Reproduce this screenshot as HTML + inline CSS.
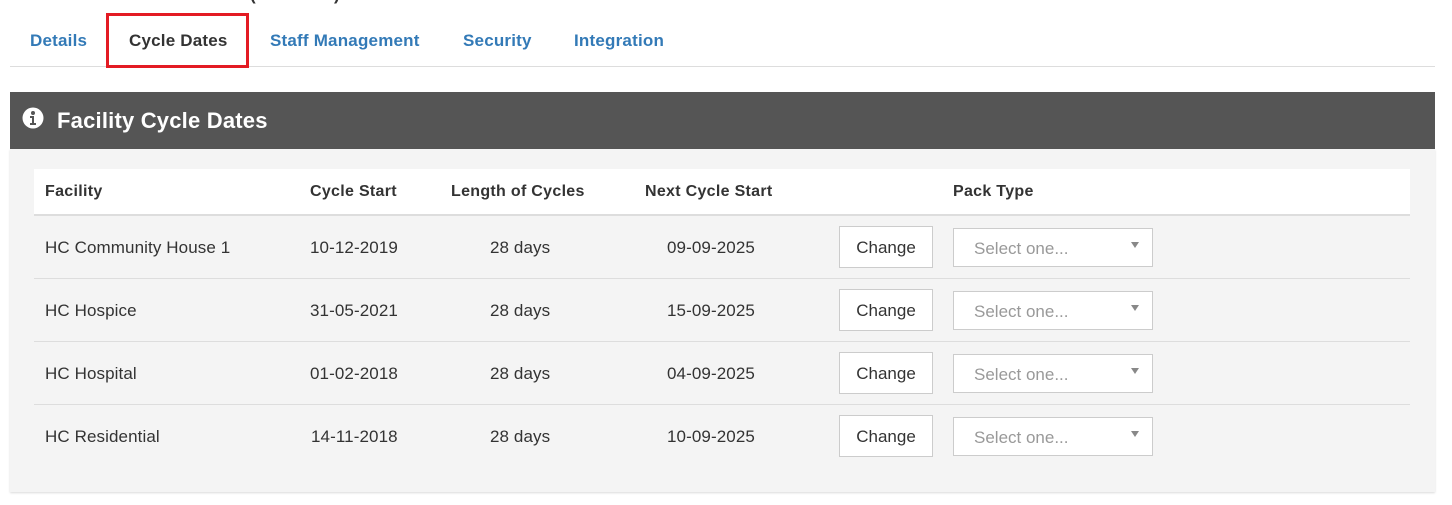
<!DOCTYPE html>
<html><head><style>
body{margin:0;width:1452px;height:505px;background:#fff;font-family:"Liberation Sans",Arial,sans-serif;position:relative;overflow:hidden}
.a{position:absolute}
.tab{position:absolute;top:31px;font-size:17px;font-weight:bold;color:#337ab7;line-height:20px;letter-spacing:0.2px}
.hdr{position:absolute;top:182px;font-size:16px;font-weight:bold;color:#333;line-height:20px;letter-spacing:0.3px}
.c{position:absolute;font-size:17px;color:#333;line-height:20px;letter-spacing:0.1px}
.btn{position:absolute;left:839px;width:92px;height:40px;border:1px solid #ccc;background:#fff;font-size:17px;color:#333;text-align:center;line-height:42px;box-sizing:content-box}
.sel{position:absolute;left:953px;width:198px;height:37px;border:1px solid #ccc;background:#fff;font-size:17px;color:#999;line-height:39px;box-sizing:content-box}
.sel span{position:absolute;left:20px}
.sel i{position:absolute;right:13px;top:13px;width:0;height:0;border-left:4px solid transparent;border-right:4px solid transparent;border-top:6px solid #888}
.row{position:absolute;left:34px;width:1376px;height:1px;background:#ddd}
</style></head><body>
<div class="a" style="left:250px;top:-15px;font-size:17px;font-weight:bold;color:#333">(</div>
<div class="a" style="left:334px;top:-15px;font-size:17px;font-weight:bold;color:#333">)</div>
<div class="tab" style="left:30px">Details</div>
<div class="tab" style="left:129px;color:#333">Cycle Dates</div>
<div class="tab" style="left:270px">Staff Management</div>
<div class="tab" style="left:463px">Security</div>
<div class="tab" style="left:574px">Integration</div>
<div class="a" style="left:10px;top:66px;width:1425px;height:1px;background:#ddd"></div>
<div class="a" style="left:106px;top:13px;width:137px;height:49px;border:3px solid #e31b23"></div>
<div class="a" style="left:10px;top:92px;width:1425px;height:57px;background:#555"></div>
<svg class="a" style="left:22px;top:107px" width="22" height="22" viewBox="0 0 22 22"><circle cx="11" cy="11" r="10.5" fill="#fff"/><circle cx="11" cy="6" r="2" fill="#555"/><path d="M8 9h4v7h2v2H8v-2h2v-5H8z" fill="#555"/></svg>
<div class="a" style="left:57px;top:108px;font-size:22px;font-weight:bold;color:#fff;line-height:26px;letter-spacing:0.2px">Facility Cycle Dates</div>
<div class="a" style="left:10px;top:149px;width:1425px;height:343px;background:#f4f4f4;box-shadow:0 1px 2px rgba(0,0,0,.15)"></div>
<div class="a" style="left:34px;top:169px;width:1376px;height:45px;background:#fff;border-bottom:2px solid #ddd"></div>
<div class="hdr" style="left:45px">Facility</div>
<div class="hdr" style="left:310px">Cycle Start</div>
<div class="hdr" style="left:451px">Length of Cycles</div>
<div class="hdr" style="left:645px">Next Cycle Start</div>
<div class="hdr" style="left:953px">Pack Type</div>

<div class="c" style="left:45px;top:238px">HC Community House 1</div>
<div class="c" style="left:310px;top:238px">10-12-2019</div>
<div class="c" style="left:490px;top:238px">28 days</div>
<div class="c" style="left:667px;top:238px">09-09-2025</div>
<div class="btn" style="top:226px">Change</div>
<div class="sel" style="top:228px"><span>Select one...</span><i></i></div>
<div class="row" style="top:278px"></div>

<div class="c" style="left:45px;top:301px">HC Hospice</div>
<div class="c" style="left:310px;top:301px">31-05-2021</div>
<div class="c" style="left:490px;top:301px">28 days</div>
<div class="c" style="left:667px;top:301px">15-09-2025</div>
<div class="btn" style="top:289px">Change</div>
<div class="sel" style="top:291px"><span>Select one...</span><i></i></div>
<div class="row" style="top:341px"></div>

<div class="c" style="left:45px;top:364px">HC Hospital</div>
<div class="c" style="left:310px;top:364px">01-02-2018</div>
<div class="c" style="left:490px;top:364px">28 days</div>
<div class="c" style="left:667px;top:364px">04-09-2025</div>
<div class="btn" style="top:352px">Change</div>
<div class="sel" style="top:354px"><span>Select one...</span><i></i></div>
<div class="row" style="top:404px"></div>

<div class="c" style="left:45px;top:427px">HC Residential</div>
<div class="c" style="left:311px;top:427px">14-11-2018</div>
<div class="c" style="left:490px;top:427px">28 days</div>
<div class="c" style="left:667px;top:427px">10-09-2025</div>
<div class="btn" style="top:415px">Change</div>
<div class="sel" style="top:417px"><span>Select one...</span><i></i></div>
</body></html>
